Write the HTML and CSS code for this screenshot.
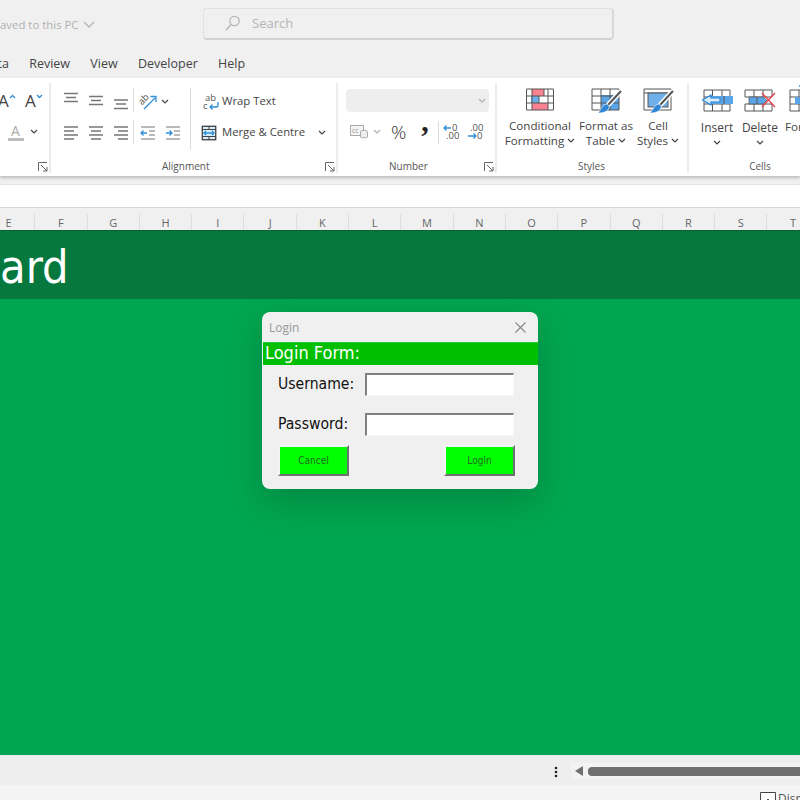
FILE: index.html
```html
<!DOCTYPE html>
<html lang="en">
<head>
<meta charset="utf-8">
<title>Login Form</title>
<link rel="stylesheet" href="styles.css">
</head>
<body>
<div class="app">
  <header class="titlebar">
    <div class="saved"><span>aved to this PC</span>
      <svg class="saved-chev" width="12" height="8" viewBox="0 0 12 8"><path d="M1 1l5 5 5-5" class="ln-pale"/></svg>
    </div>
    <div class="search">
      <svg width="18" height="18" viewBox="0 0 18 18"><circle cx="10.5" cy="7" r="4.7" class="ln-pale"/><path d="M7 10.5L2 16" class="ln-pale"/></svg>
      <span>Search</span>
    </div>
  </header>

  <nav class="tabs"><span>ta</span><span>Review</span><span>View</span><span>Developer</span><span>Help</span></nav>

  <section class="ribbon">
    <div class="group g-font">
      <div class="font-grid">
        <div class="grow-a"><span class="big-a">A</span><svg width="7" height="5" viewBox="0 0 7 5"><path d="M1 4l2.5-2.5L6 4" class="ln-blue"/></svg></div>
        <div class="grow-a"><span class="big-a">A</span><svg width="7" height="5" viewBox="0 0 7 5"><path d="M1 1l2.5 2.5L6 1" class="ln-blue"/></svg></div>
        <div class="color-a"><span>A</span><i></i></div>
        <svg class="chev" width="8" height="6" viewBox="0 0 8 6"><path d="M1 1l3 3 3-3" class="ln-dark"/></svg>
      </div>
      <div class="group-foot"><span></span><span></span><svg class="launch" width="10" height="10" viewBox="0 0 10 10"><path d="M9 .5H.5V9M3 3l6 6M9 5v4H5" class="ln-mid"/></svg></div>
    </div>

    <div class="group g-align">
      <div class="align-body">
        <div class="align-grid">
          <svg width="16" height="20" viewBox="0 0 16 20"><path d="M1 1.500h14M3 5.500h10M1 9.500h14" class="ln-grey"/></svg>
          <svg width="16" height="20" viewBox="0 0 16 20"><path d="M1 4.500h14M3 8.500h10M1 12.500h14" class="ln-grey"/></svg>
          <svg width="16" height="20" viewBox="0 0 16 20"><path d="M1 8h14M3 12h10M1 16.500h14" class="ln-grey"/></svg>
          <svg width="16" height="16" viewBox="0 0 16 16"><path d="M1 2h14M1 6h10M1 10h14M1 14h10" class="ln-grey"/></svg>
          <svg width="16" height="16" viewBox="0 0 16 16"><path d="M1 2h14M3 6h10M1 10h14M3 14h10" class="ln-grey"/></svg>
          <svg width="16" height="16" viewBox="0 0 16 16"><path d="M1 2h14M5 6h10M1 10h14M5 14h10" class="ln-grey"/></svg>
        </div>
        <div class="sep-col"><i></i><i></i></div>
        <div class="indent-col">
          <div class="orient-row">
            <svg width="20" height="20" viewBox="0 0 20 20"><text x="2" y="11" transform="rotate(-45 6 10)" class="ic-text">ab</text><path d="M6 17L17 6M12.500 4.500H18V10" class="ln-blue"/></svg>
            <svg class="chev" width="8" height="6" viewBox="0 0 8 6"><path d="M1 1l3 3 3-3" class="ln-dark"/></svg>
          </div>
          <div class="indent-row">
            <svg width="16" height="16" viewBox="0 0 16 16"><path d="M1 2h14M9 6h6M9 10h6M1 14h14" class="ln-grey-thin"/><path d="M1 8h6M3.500 5.500L1 8l2.500 2.500" class="ln-blue"/></svg>
            <svg width="16" height="16" viewBox="0 0 16 16"><path d="M1 2h14M9 6h6M9 10h6M1 14h14" class="ln-grey-thin"/><path d="M1 8h6M4.500 5.500L7 8l-2.500 2.500" class="ln-blue"/></svg>
          </div>
        </div>
        <div class="sep-full"></div>
        <div class="wrap-col">
          <div class="wrap-row wrap-a">
            <svg width="17" height="18" viewBox="0 0 17 18"><text x="2" y="8" class="ic-text">ab</text><text x="0" y="16" class="ic-text">c</text><path d="M15 9v3a2 2 0 0 1-2 2H7M9.500 11.500L7 14l2.500 2.500" class="ln-blue"/></svg>
            <span class="wrap-text">Wrap Text</span>
          </div>
          <div class="wrap-row">
            <svg width="16" height="16" viewBox="0 0 16 16"><rect x="1.250" y="1.250" width="13.500" height="13.500" fill="#d6ecf8" stroke="#333" stroke-width="1.200"/><path d="M1 4.500h14M1 11.500h14M8 1v3M8 12v3" class="ln-thin-dark"/><path d="M3 8h10M5 6L3 8l2 2M11 6l2 2-2 2" class="ln-blue"/></svg>
            <span class="wrap-text merge-text">Merge &amp; Centre</span>
            <svg class="chev" width="8" height="6" viewBox="0 0 8 6"><path d="M1 1l3 3 3-3" class="ln-dark"/></svg>
          </div>
        </div>
      </div>
      <div class="group-foot"><span></span><span>Alignment</span><svg class="launch" width="10" height="10" viewBox="0 0 10 10"><path d="M9 .5H.5V9M3 3l6 6M9 5v4H5" class="ln-mid"/></svg></div>
    </div>

    <div class="group g-number">
      <div class="num-body">
        <div class="num-select"><svg width="8" height="6" viewBox="0 0 8 6"><path d="M1 1l3 3 3-3" class="ln-pale"/></svg></div>
        <div class="num-row">
          <svg class="acct" width="18" height="14" viewBox="0 0 18 14"><rect x=".5" y=".5" width="13" height="10" fill="#f4f4f4" stroke="#aaa"/><text x="2" y="8" class="ic-text-pale">cc</text><ellipse cx="14" cy="7" rx="3.500" ry="1.800" fill="#eee" stroke="#aaa"/><path d="M10.500 7v5c0 1 7 1 7 0V7" fill="#eee" stroke="#aaa"/></svg>
          <svg class="acct-chev" width="8" height="6" viewBox="0 0 8 6"><path d="M1 1l3 3 3-3" class="ln-pale"/></svg>
          <span class="percent">%</span>
          <span class="comma">,</span>
          <i class="num-sep"></i>
          <svg width="17" height="18" viewBox="0 0 17 18"><text x="9" y="8" class="ic-num">0</text><text x="3" y="16" class="ic-num">.00</text><path d="M1 5h7M3.500 2.500L1 5l2.500 2.500" class="ln-blue"/></svg>
          <svg class="inc" width="17" height="18" viewBox="0 0 17 18"><text x="3" y="8" class="ic-num">.00</text><text x="10" y="16" class="ic-num">0</text><path d="M1 13h8M6.500 10.500L9 13l-2.500 2.500" class="ln-blue"/></svg>
        </div>
      </div>
      <div class="group-foot"><span></span><span>Number</span><svg class="launch" width="10" height="10" viewBox="0 0 10 10"><path d="M9 .5H.5V9M3 3l6 6M9 5v4H5" class="ln-mid"/></svg></div>
    </div>

    <div class="group g-styles">
      <div class="tool-row styles-row">
        <div class="tool t-cond">
          <svg width="30" height="23" viewBox="0 0 30 23"><rect x="7" y="1" width="12" height="7" fill="#f8828f"/><rect x="6" y="8" width="8" height="7" fill="#6fb0ea"/><rect x="7" y="15" width="16" height="7" fill="#f8828f"/><path d="M1.500 1h27v21h-27zM1.500 8h27M1.500 15h27M7 1v21M14 8v7M19 1v7M23 1v21" class="ln-table"/></svg>
          <span>Conditional</span><span>Formatting <svg width="8" height="6" viewBox="0 0 8 6"><path d="M1 1l3 3 3-3" class="ln-dark"/></svg></span>
        </div>
        <div class="tool t-table">
          <svg width="32" height="23" viewBox="0 0 32 23"><rect x="11" y="7" width="18" height="15" fill="#5aa5e8"/><path d="M2 1h27v21H2zM2 8h27M2 15h27M11 1v21M20 1v21" class="ln-table"/><path d="M31 3L18 17" class="brush-out"/><path d="M31 3L18 17" class="brush"/><path d="M14 17c3-2 6 0 5 3-1 3-5 5-11 5 2-2 3-5 6-8z" fill="#2f86d6" stroke="#fff" stroke-width=".6"/></svg>
          <span>Format as</span><span>Table <svg width="8" height="6" viewBox="0 0 8 6"><path d="M1 1l3 3 3-3" class="ln-dark"/></svg></span>
        </div>
        <div class="tool t-cell">
          <svg width="32" height="23" viewBox="0 0 32 23"><path d="M2 1h27v21H2zM2 5h27" class="ln-table"/><rect x="6" y="5" width="20" height="14" fill="#6fb0ea" stroke="#555"/><path d="M31 3L18 17" class="brush-out"/><path d="M31 3L18 17" class="brush"/><path d="M14 17c3-2 6 0 5 3-1 3-5 5-11 5 2-2 3-5 6-8z" fill="#2f86d6" stroke="#fff" stroke-width=".6"/></svg>
          <span>Cell</span><span>Styles <svg width="8" height="6" viewBox="0 0 8 6"><path d="M1 1l3 3 3-3" class="ln-dark"/></svg></span>
        </div>
      </div>
      <div class="group-foot"><span></span><span>Styles</span><span></span></div>
    </div>

    <div class="group g-cells">
      <div class="tool-row cells-row">
        <div class="tool t-ins">
          <svg width="32" height="23" viewBox="0 0 32 23"><path d="M3 1h26v21H3zM3 8h26M3 15h26M11.500 1v21M21 1v21" class="ln-table"/><rect x="6" y="7" width="26" height="8" fill="#5aa5e8"/><path d="M23 7v8" class="ln-table"/><path d="M10 6L1.500 11 10 16v-3h9V9h-9z" fill="#d8ecfa" stroke="#2f86d6" stroke-width="1.200"/></svg>
          <span>Insert</span>
          <svg class="tool-chev" width="8" height="6" viewBox="0 0 8 6"><path d="M1 1l3 3 3-3" class="ln-dark"/></svg>
        </div>
        <div class="tool t-del">
          <svg width="32" height="23" viewBox="0 0 32 23"><path d="M1 8V1h27v7zM1 15h27v7H1zM10 1v7M19 1v7M10 15v7M19 15v7" class="ln-table"/><path d="M5 8h14l4 3.500-4 3.500H5z" fill="#5aa5e8" stroke="#555" stroke-width=".7"/><path d="M13 8v7" class="ln-table"/><path d="M18 4l13 14M31 4L18 18" class="ln-red"/></svg>
          <span>Delete</span>
          <svg class="tool-chev" width="8" height="6" viewBox="0 0 8 6"><path d="M1 1l3 3 3-3" class="ln-dark"/></svg>
        </div>
        <div class="tool t-fmt">
          <svg class="fmt-ic" width="32" height="23" viewBox="0 0 32 23"><path d="M1 1h27v21H1zM1 8h27M1 15h27M10 1v21" class="ln-table"/><rect x="6" y="8" width="22" height="7" fill="#5aa5e8"/><path d="M10 -3h14" class="ln-blue"/></svg>
          <span class="fmt-text">For</span>
        </div>
      </div>
      <div class="group-foot cells-foot"><span>Cells</span></div>
    </div>
  </section>

  <div class="ribbon-gap"></div>
  <div class="formula"></div>

  <div class="cols">
    <span>E</span><span>F</span><span>G</span><span>H</span><span>I</span><span>J</span><span>K</span><span>L</span><span>M</span><span>N</span><span>O</span><span>P</span><span>Q</span><span>R</span><span>S</span><span>T</span>
  </div>

  <main class="sheet">
    <div class="banner">ard</div>
    <div class="sheet-body">
      <form class="dialog">
        <div class="dialog-title">
          <span>Login</span>
          <svg width="11" height="11" viewBox="0 0 11 11"><path d="M.5.500l10 10M10.500.500l-10 10" class="ln-x"/></svg>
        </div>
        <div class="dialog-band">Login Form:</div>
        <div class="dialog-body">
          <div class="field"><label for="u">Username:</label><input id="u" type="text"></div>
          <div class="field"><label for="p">Password:</label><input id="p" type="password"></div>
          <div class="actions"><button type="button">Cancel</button><button type="button">Login</button></div>
        </div>
      </form>
    </div>
  </main>

  <div class="scrollrow">
    <svg class="dots" width="4" height="12" viewBox="0 0 4 12"><circle cx="2" cy="2" r="1.300"/><circle cx="2" cy="6" r="1.300"/><circle cx="2" cy="10" r="1.300"/></svg>
    <div class="scrolltrack">
      <svg width="8" height="10" viewBox="0 0 8 10"><path d="M8 0v10L0 5z" fill="#707070"/></svg>
      <div class="thumb"></div>
    </div>
  </div>

  <footer class="status">
    <svg width="16" height="13" viewBox="0 0 16 13"><path d="M.5 11V.5h15V11" fill="#fff" stroke="#444"/><path d="M5 12l3-5 3 5M8 7v5" fill="none" stroke="#444"/></svg>
    <span>Displ</span>
  </footer>
</div>
</body>
</html>
```

FILE: styles.css
```css
* { box-sizing: border-box; }
html, body { margin: 0; padding: 0; }
body { width: 800px; height: 800px; overflow: hidden; background: #f0f0f0; font-family: "Open Sans", "Noto Sans", sans-serif; color: #444; }
svg { display: block; flex: none; fill: none; overflow: visible; }
svg text { stroke: none; }

.ln-pale { fill: none; stroke: #b4b4b4; stroke-width: 1.3; }
.ln-dark { fill: none; stroke: #444; stroke-width: 1.2; }
.ln-mid { fill: none; stroke: #666; stroke-width: 1; }
.ln-grey { fill: none; stroke: #777; stroke-width: 1.3; }
.ln-grey-thin { fill: none; stroke: #777; stroke-width: 1.2; }
.ln-blue { fill: none; stroke: #2f8fd6; stroke-width: 1.3; }
.ln-thin-dark { fill: none; stroke: #444; stroke-width: 1; }
.ln-table { fill: none; stroke: #555; stroke-width: 1; }
.ln-red { fill: none; stroke: #e8404a; stroke-width: 1.3; }
.ln-x { fill: none; stroke: #888; stroke-width: 1.1; }
.brush-out { stroke: #fff; stroke-width: 5; }
.brush { stroke: #555; stroke-width: 2; }
.ic-text { font: 9.500px "Open Sans", sans-serif; fill: #555; }
.ic-text-pale { font: 7px "Open Sans", sans-serif; fill: #999; }
.ic-num { font: 9.500px "Open Sans", sans-serif; fill: #555; }

.app { width: 800px; height: 800px; display: flex; flex-direction: column; overflow: hidden; }

.titlebar { height: 46px; display: flex; padding-top: 8px; flex: none; }
.saved { width: 203px; height: 32px; display: flex; align-items: center; gap: 4px; font-size: 11.400px; color: #b0b0b0; }
.saved-chev { margin-top: 1px; }
.search { width: 411px; height: 32px; display: flex; align-items: center; gap: 10px; padding: 0 0 2px 20px; border: 1px solid #e2e2e2; border-bottom: 2px solid #d2d2d2; border-right: 2px solid #d8d8d8; border-radius: 4px; font-size: 13px; color: #b4b4b4; }

.tabs { height: 32px; flex: none; display: flex; align-items: center; gap: 20.300px; margin-left: -2.500px; font-size: 12.500px; color: #444; padding-top: 2px; }

.ribbon { height: 98px; flex: none; display: flex; background: #fff; padding-top: 5px; box-shadow: 0 2px 3px rgba(0,0,0,.22); position: relative; }
.group { height: 90px; flex: none; display: flex; flex-direction: column; border-right: 2px solid #ececec; }
.g-font { width: 51px; }
.g-align { width: 287px; }
.g-number { width: 159px; }
.g-styles { width: 192px; }
.g-cells { width: 111px; border-right: 0; }

.group-foot { margin-top: auto; height: 13px; display: grid; grid-template-columns: 1fr auto 1fr; align-items: center; font-size: 10px; line-height: 13px; color: #555; padding-right: 1px; }
.launch { justify-self: end; }
.g-align .group-foot { grid-template-columns: 111px auto 1fr; }
.g-number .group-foot { grid-template-columns: 51px auto 1fr; }
.cells-foot { grid-template-columns: 142px; justify-items: center; }

/* Font fragment */
.font-grid { display: grid; grid-template-columns: 24px 25px; grid-auto-rows: 31px; margin-top: 2px; align-items: center; }
.grow-a { display: flex; align-items: flex-start; }
.grow-a:first-child { margin-left: -2px; }
.grow-a:nth-child(2) { margin-left: 1px; }
.big-a { font-size: 17px; line-height: 20px; color: #444; }
.grow-a svg { margin-top: 3px; }
.color-a { width: 17px; margin: 1px 0 0 7px; display: flex; flex-direction: column; align-items: center; font-size: 14px; line-height: 13px; color: #aaa; }
.color-a i { width: 16px; height: 3px; background: #bdbdbd; display: block; margin-top: 1px; }
.font-grid .chev { margin-left: 6px; }

/* Alignment */
.align-body { display: flex; margin-top: 3px; padding-left: 7px; }
.align-grid { width: 75px; display: grid; grid-template-columns: repeat(3, 25px); grid-auto-rows: 31px; align-items: center; justify-items: center; }
.sep-col { width: 2px; display: flex; flex-direction: column; gap: 8px; padding-top: 2px; }
.sep-col i { display: block; width: 1px; height: 24px; background: #dcdcdc; }
.indent-col { width: 55px; padding-left: 5px; }
.orient-row { height: 31px; display: flex; align-items: center; gap: 3px; margin-left: -2px; }
.indent-row { height: 31px; display: flex; align-items: center; gap: 9px; }
.sep-full { width: 1px; height: 62px; background: #dcdcdc; margin-top: 2px; }
.wrap-col { padding-left: 10px; font-size: 11.300px; }
.wrap-row { height: 31px; display: flex; align-items: center; gap: 5px; color: #444; white-space: nowrap; }
.wrap-a { padding-left: 2px; gap: 2px; }
.wrap-text { margin-top: -2px; }
.merge-text { margin-right: 8px; }

/* Number */
.num-body { padding: 6px 0 0 8px; }
.num-select { width: 143px; height: 23px; background: #eeeeee; border-radius: 4px; display: flex; align-items: center; justify-content: flex-end; padding-right: 3px; }
.num-row { display: flex; align-items: center; height: 24px; margin-top: 8px; padding-left: 4px; }
.acct-chev { margin-left: 5px; }
.percent { font-size: 19px; font-weight: 300; margin-left: 10px; width: 22px; color: #333; line-height: 24px; }
.comma { font-family: "Liberation Serif", serif; font-size: 30px; font-weight: 700; width: 14px; margin-left: 5px; line-height: 24px; height: 24px; margin-top: -22px; color: #222; text-align: center; }
.num-sep { display: block; width: 1px; height: 23px; background: #dcdcdc; margin: 0 4px 0 6px; }
.inc { margin-left: 7px; }

/* Tools */
.tool-row { display: flex; }
.tool { flex: none; display: flex; flex-direction: column; align-items: center; font-size: 11.600px; line-height: 15px; color: #444; white-space: nowrap; }
.tool > svg:first-child { margin-bottom: 7px; }
.tool span { display: flex; align-items: center; gap: 3px; }
.tool span svg { margin-top: 1px; }
.styles-row { padding: 5px 0 0 8px; }
.t-cond { width: 70px; }
.t-table { width: 62px; }
.t-cell { width: 42px; }
.cells-row { padding: 6px 0 0 7px; }
.t-ins { width: 42px; }
.t-del { width: 44px; }
.t-ins > svg:first-child, .t-del > svg:first-child { margin-bottom: 8px; }
.t-fmt { width: 32px; margin-left: 3px; align-items: flex-start; }
.fmt-ic { margin-left: 4px; }
.t-ins span, .t-del span { font-size: 12px; }
.tool-chev { margin-top: 5px; }

.ribbon-gap { height: 8px; flex: none; }
.formula { height: 23px; flex: none; background: #fff; border-top: 1px solid #e2e2e2; }

.cols { height: 23px; flex: none; display: grid; grid-template-columns: repeat(16, 52.300px); margin-left: -17px; background: #f0f0f0; border-top: 1px solid #d8d8d8; font-size: 11px; color: #666; align-items: end; }
.cols span { height: 16px; line-height: 17px; text-align: center; border-right: 1px solid #dddddd; }

.sheet { height: 525px; flex: none; background: #00a651; display: flex; flex-direction: column; border-top: 1px solid #0c5f33; }
.banner { height: 68px; flex: none; background: #06783e; color: #fff; font-family: "DejaVu Sans Condensed", "DejaVu Sans", sans-serif; font-size: 46.500px; line-height: 73px; overflow: hidden; }
.sheet-body { flex: 1; padding: 13px 0 0 262px; }

.dialog { width: 276px; height: 177px; background: #f0f0f0; border-radius: 8px; box-shadow: 0 12px 34px rgba(0,60,25,.28); overflow: hidden; font-family: "DejaVu Sans Condensed", "DejaVu Sans", sans-serif; }
.dialog-title { height: 30px; display: flex; align-items: center; justify-content: space-between; padding: 0 12px 0 7px; font-family: "Open Sans", sans-serif; font-size: 12px; color: #999; }
.dialog-band { height: 23px; margin-left: 1px; background: #00bf00; color: #fff; font-size: 18px; line-height: 20px; padding-left: 2px; border-top: 1px solid #22c933; }
.dialog-body { padding: 8px 23px 0 16px; }
.field { display: flex; align-items: center; height: 23px; margin-bottom: 17px; color: #111; font-size: 15.600px; }
.field label { width: 87px; flex: none; margin-top: -2px; }
.field input { width: 149px; height: 23px; padding: 0; background: #fff; border-style: solid; border-width: 2px 1px 1px 2px; border-color: #808080 #f8f8f8 #f8f8f8 #808080; outline: none; }
.actions { display: flex; justify-content: space-between; margin-top: -8px; }
.actions button { width: 71px; height: 31px; padding: 0; background: #00ff00; border-style: solid; border-width: 2px; border-color: #f4f4f4 #707070 #707070 #f4f4f4; font-family: inherit; font-size: 10px; color: #1f6b1f; }

.scrollrow { height: 30px; flex: none; display: flex; align-items: center; background: #eeeeee; padding-left: 554px; border-top: 1px solid #e6e6e6; }
.dots { fill: #222; margin-top: 2px; }
.scrolltrack { width: 232px; height: 16px; margin-left: 13px; display: flex; align-items: center; gap: 5px; background: #f3f3f3; padding-left: 4px; margin-top: 1px; }
.thumb { flex: 1; height: 9px; background: #707070; border-radius: 4px 0 0 4px; }

.status { flex: 1; display: flex; align-items: flex-start; gap: 2px; padding: 7px 0 0 760px; background: #f4f4f4; font-size: 12px; line-height: 13px; color: #555; white-space: nowrap; }
```
